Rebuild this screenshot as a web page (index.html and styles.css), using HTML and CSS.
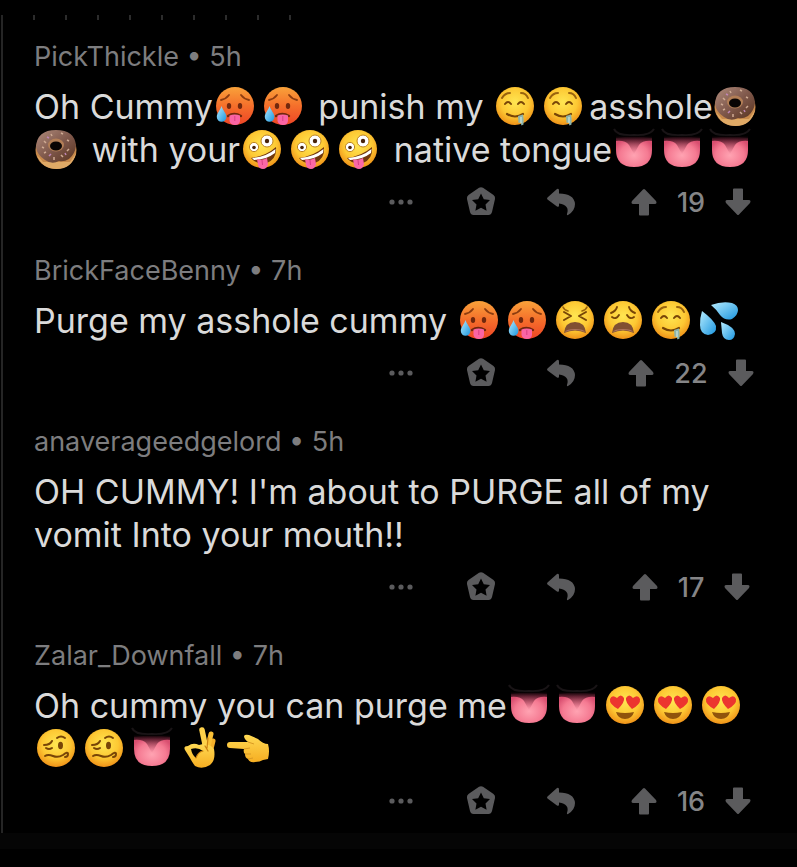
FILE: index.html
```
<!DOCTYPE html>
<html lang="en">
<head>
<meta charset="utf-8">
<meta name="viewport" content="width=device-width, initial-scale=1">
<title>Comments</title>
<link rel="stylesheet" href="styles.css">
</head>
<body>
<svg class="defs" aria-hidden="true">
  <defs>
    <radialGradient id="yellow" cx=".5" cy=".4" r=".62"><stop offset="0" stop-color="#ffe652"/><stop offset=".6" stop-color="#fdc833"/><stop offset="1" stop-color="#ee8d16"/></radialGradient>
    <linearGradient id="hotg" x1="0" y1="0" x2="0" y2="1"><stop offset="0" stop-color="#f9a23a"/><stop offset=".5" stop-color="#f56f2b"/><stop offset="1" stop-color="#ee4526"/></linearGradient>
    <linearGradient id="water" x1="0" y1="0" x2="1" y2="1"><stop offset="0" stop-color="#b5ecff"/><stop offset="1" stop-color="#1c96df"/></linearGradient>
    <radialGradient id="pink" cx=".5" cy=".62" r=".6"><stop offset="0" stop-color="#ffa3b2"/><stop offset=".65" stop-color="#f57a92"/><stop offset="1" stop-color="#d94f70"/></radialGradient>
    <linearGradient id="throat" x1="0" y1="0" x2="0" y2="1"><stop offset="0" stop-color="#000"/><stop offset=".25" stop-color="#3a0f1c" stop-opacity=".75"/><stop offset="1" stop-color="#b8405f" stop-opacity="0"/></linearGradient>
    <linearGradient id="hand" x1="0" y1="0" x2="0" y2="1"><stop offset="0" stop-color="#ffd953"/><stop offset="1" stop-color="#f6ae22"/></linearGradient>
    <linearGradient id="glaze" x1="0" y1="0" x2="1" y2="1"><stop offset="0" stop-color="#b08b7c"/><stop offset=".5" stop-color="#80594c"/><stop offset="1" stop-color="#57321f"/></linearGradient>

    <symbol id="hot" viewBox="0 0 44 44">
      <circle cx="22" cy="22" r="19" fill="url(#hotg)"/>
      <path d="M8 16q5-1 8-5M28 11q3 4 8 5" fill="none" stroke="#8c3c10" stroke-width="1.8" stroke-linecap="round"/>
      <ellipse cx="16" cy="22" rx="2.2" ry="2.9" fill="#71280d"/><ellipse cx="27" cy="22" rx="2.2" ry="2.9" fill="#71280d"/>
      <path d="M15 32q6-4 13 0" fill="none" stroke="#71280d" stroke-width="2.4" stroke-linecap="round"/>
      <path d="M16.500 31.500q5-2 10.500 0v5.500q-.5 4-5 4t-5.500-4z" fill="#fa64a4"/><path d="M21.800 32v5" stroke="#d93f83"/>
      <path d="M8.500 22C7 27 3.800 29 3.800 33a4.800 4.800 0 0 0 9.600 0C13.400 29 10 27 8.500 22z" fill="url(#water)"/>
    </symbol>
    <symbol id="drool" viewBox="0 0 44 44">
      <circle cx="22" cy="22" r="19" fill="url(#yellow)"/>
      <path d="M9 14q3-5 8-5M28 9q5 0 7 5" fill="none" stroke="#99630e" stroke-width="2" stroke-linecap="round"/>
      <path d="M12 20q3-4 6 0M25 20q3-4 6 0" fill="none" stroke="#784507" stroke-width="2" stroke-linecap="round"/>
      <path d="M14 30q8 5 16 0" fill="none" stroke="#784507" stroke-width="2.200" stroke-linecap="round"/>
      <path d="M25 32l5-1.500q1 4 .5 10l-2 1-1-3-2 .5z" fill="#8db5ac"/><path d="M28 33v6" stroke="#dceee5" stroke-width="1"/>
    </symbol>
    <symbol id="zany" viewBox="0 0 44 44">
      <circle cx="22" cy="22" r="19" fill="url(#yellow)"/>
      <circle cx="14" cy="20" r="4.600" fill="#fff" stroke="#bd8420"/><circle cx="14" cy="20.500" r="1.800" fill="#48240c"/>
      <circle cx="27" cy="14" r="6" fill="#fff" stroke="#bd8420"/><circle cx="27" cy="14" r="2.200" fill="#48240c"/>
      <path d="M11 31Q26 29 36 20Q37 32 27 36Q16 38 11 31z" fill="#71370c"/><path d="M12 31Q26 30 35.500 22L35 26Q26 33 14 33z" fill="#fff"/>
      <path d="M17 32q5 2 10-1l1 6q-1 5-5 5t-5-4z" fill="#fa68a6"/><path d="M22 33l.5 5" stroke="#d93f83"/>
    </symbol>
    <symbol id="tired" viewBox="0 0 44 44">
      <circle cx="22" cy="22" r="19" fill="url(#yellow)"/>
      <path d="M10 9q1 3 5 4M34 9q-1 3-5 4" fill="none" stroke="#9a650e" stroke-width="1.600" stroke-linecap="round"/>
      <path d="M11 14l7 4-7 4M33 14l-7 4 7 4" fill="none" stroke="#784507" stroke-width="2" stroke-linecap="round" stroke-linejoin="round"/>
      <path d="M11 35q1-11 11-11t11 11q-11-5-22 0z" fill="#805032"/><path d="M12 34q1-3 10-3t10 3q-10-4-20 0z" fill="#ad755e"/>
    </symbol>
    <symbol id="weary" viewBox="0 0 44 44">
      <circle cx="22" cy="22" r="19" fill="url(#yellow)"/>
      <path d="M10 15q5-2 6-6M28 9q1 4 6 6M11 19q4 3 7-2M26 17q3 5 7 2" fill="none" stroke="#784507" stroke-width="1.900" stroke-linecap="round"/>
      <path d="M11 35q1-11 11-11t11 11q-11-5-22 0z" fill="#805032"/><path d="M12 34q1-3 10-3t10 3q-10-4-20 0z" fill="#ad755e"/>
    </symbol>
    <symbol id="hearts" viewBox="0 0 44 44">
      <circle cx="22" cy="22" r="19" fill="url(#yellow)"/>
      <path d="M15 26Q6 21 7 16Q9 11 14 15Q18 10 21 15Q22 19 15 26z" fill="#ec352f"/><path d="M29 26Q22 19 23 15Q26 10 30 15Q35 11 37 16Q38 21 29 26z" fill="#ec352f"/>
      <path d="M13 29q9 2 18 0-2 7-9 7t-9-7z" fill="#90540c"/>
    </symbol>
    <symbol id="woozy" viewBox="0 0 44 44">
      <circle cx="22" cy="22" r="19" fill="url(#yellow)"/>
      <path d="M10 19q6 0 8-4M12 22q3 2 6 0M23 12q4-3 8 0M11 30q3-2 8 0t10-1q5-4 5-1 0 3-3 3" fill="none" stroke="#784507" stroke-width="2" stroke-linecap="round"/>
      <ellipse cx="26.500" cy="19.500" rx="2.500" ry="3.700" fill="#784507"/>
    </symbol>
    <symbol id="tongue" viewBox="0 0 44 44">
      <path d="M2 2q3 7 20 6Q38 9 42 2" fill="none" stroke="#191416" stroke-width="2"/>
      <path d="M4 11Q22 8 40 11V23Q40 40 22 40T4 23z" fill="url(#pink)"/>
      <path d="M4 9H40V14Q31 13 27 18L22 27 17 18Q13 13 4 14z" fill="url(#throat)"/>
    </symbol>
    <symbol id="donut" viewBox="0 0 44 44">
      <ellipse cx="22" cy="23" rx="20.500" ry="19" fill="#c7894b"/><path d="M3 28Q8 42 23 42T42 26L36 35H9z" fill="#e0aa66"/>
      <path d="M2 20Q3 3 22 3T42 19Q41 27 35 32Q30 35 25 34Q18 38 11 33Q3 28 2 20z" fill="url(#glaze)"/>
      <ellipse cx="22" cy="18" rx="8" ry="6.500" fill="#b27e56"/><ellipse cx="22" cy="19" rx="6" ry="4.600" fill="#090504"/>
      <path d="M10 14l2 2M17 7l1 2M27 6l2 1M33 13l2 1M35 22l-2 2M27 28l2 2M20 30v3M12 25l-2 1M8 20l2 1" stroke="#d0ab94" stroke-width="1.500"/><path d="M13 10l2 1M31 26l1 2M15 29l2-2" stroke="#bf86b6" stroke-width="1.500"/>
    </symbol>
    <symbol id="drops" viewBox="0 0 44 44">
      <path d="M14 7Q25 3 35 5Q41 7 41 12T35 21Q28 23 23 17Q20 12 14 7z" fill="url(#water)"/><path d="M5 13Q17 22 19 28Q20 36 11 37Q3 36 3 27Q3 19 5 13z" fill="url(#water)"/><path d="M24 24Q38 29 38 36Q37 42 32 42Q26 42 25 35z" fill="url(#water)"/>
    </symbol>
    <symbol id="ok" viewBox="0 0 44 44">
      <path d="M35 15L32 27" stroke="#f5b02a" stroke-width="5" stroke-linecap="round"/>
      <path d="M33 8L29 25" stroke="#fbc136" stroke-width="5" stroke-linecap="round"/>
      <path d="M24 4L28 23" stroke="#ffd24a" stroke-width="5.500" stroke-linecap="round"/>
      <path fill-rule="evenodd" d="M25 18Q32 18 36 23Q38 34 32 39Q24 44 17 40Q14 36 12 32L7 24Q5 20 10 20Q15 16 21 19zM13 23Q14 29 18 32Q20 26 25 25Q20 21 13 23z" fill="url(#hand)"/>
      <path d="M18 32Q20 26 25 25M27 20L30 25M30 12L29 22" fill="none" stroke="#cc8212" stroke-width="1.200" stroke-linecap="round"/>
    </symbol>
    <symbol id="point" viewBox="0 0 44 44">
      <path d="M4 16q-3 0-3 3t3 3l14 1q-1 3 1 5 0 4 3 5 2 4 7 3 5 0 8-2l5-1q2-8 0-15-5 0-10-5l-9-4q-4-1-5 1 0 3 4 6z" fill="url(#hand)"/>
      <path d="M18 23l6-1M19 28l6 0M22 33l5-1M22 16l6 2" fill="none" stroke="#d99a24" stroke-width="1"/>
    </symbol>

    <symbol id="i-more" viewBox="0 0 32 32"><circle cx="7" cy="16" r="2.600"/><circle cx="16" cy="16" r="2.600"/><circle cx="25" cy="16" r="2.600"/></symbol>
    <symbol id="i-award" viewBox="0 0 32 32"><path fill-rule="evenodd" d="M14 1.800Q16 .6 18 1.800L28.500 9Q30.500 10.500 30 13L27 26Q26.200 29 23.500 29H8.500Q5.800 29 5 26L2 13Q1.500 10.500 3.500 9zM16 7.500l-2.800 5.700-6.200.9 4.500 4.400-1.100 6.200L16 21.800l5.600 2.900-1.100-6.200 4.500-4.400-6.200-.9z"/></symbol>
    <symbol id="i-reply" viewBox="0 0 32 32"><path d="M2.500 11.500L12 3Q14 2 14 4.500V7.500Q29 7.500 30 18Q30 25 23 29Q21.500 29.500 22 28Q25 19 14 17.500V19.500Q14 21.500 12 20.500L2.500 13.500Q1.500 12.500 2.500 11.500z"/></symbol>
    <symbol id="i-up" viewBox="0 0 26 28"><path d="M12 1.500Q13 .3 14 1.500L25 13Q26.500 16 23.500 16H18V26.500Q18 27.500 17 27.500H9Q8 27.500 8 26.500V16H2.500Q-.5 16 1 13z"/></symbol>
    <symbol id="i-down" viewBox="0 0 26 28"><path d="M12 26.500Q13 27.700 14 26.500L25 15Q26.500 12 23.500 12H18V1.500Q18 .5 17 .5H9Q8 .5 8 1.500V12H2.500Q-.5 12 1 15z"/></symbol>
  </defs>
</svg>

<main class="thread">
  <div class="ticks" aria-hidden="true"><i></i><i></i><i></i><i></i><i></i><i></i><i></i><i></i><i></i></div>

  <article class="comment">
    <header class="meta">PickThickle • 5h</header>
    <p class="body">Oh Cummy<svg class="emoji"><use href="#hot"/></svg><svg class="emoji"><use href="#hot"/></svg> punish my <svg class="emoji"><use href="#drool"/></svg><svg class="emoji"><use href="#drool"/></svg>asshole<svg class="emoji"><use href="#donut"/></svg><svg class="emoji"><use href="#donut"/></svg> with your<svg class="emoji"><use href="#zany"/></svg><svg class="emoji"><use href="#zany"/></svg><svg class="emoji"><use href="#zany"/></svg> native tongue<svg class="emoji"><use href="#tongue"/></svg><svg class="emoji"><use href="#tongue"/></svg><svg class="emoji"><use href="#tongue"/></svg></p>
    <footer class="actions">
      <button class="action" aria-label="More"><svg class="icon"><use href="#i-more"/></svg></button>
      <button class="action" aria-label="Award"><svg class="icon"><use href="#i-award"/></svg></button>
      <button class="action" aria-label="Reply"><svg class="icon"><use href="#i-reply"/></svg></button>
      <div class="votes"><button aria-label="Upvote"><svg class="arrow"><use href="#i-up"/></svg></button><span>19</span><button aria-label="Downvote"><svg class="arrow"><use href="#i-down"/></svg></button></div>
    </footer>
  </article>

  <article class="comment">
    <header class="meta">BrickFaceBenny • 7h</header>
    <p class="body">Purge my asshole cummy <svg class="emoji"><use href="#hot"/></svg><svg class="emoji"><use href="#hot"/></svg><svg class="emoji"><use href="#tired"/></svg><svg class="emoji"><use href="#weary"/></svg><svg class="emoji"><use href="#drool"/></svg><svg class="emoji"><use href="#drops"/></svg></p>
    <footer class="actions">
      <button class="action" aria-label="More"><svg class="icon"><use href="#i-more"/></svg></button>
      <button class="action" aria-label="Award"><svg class="icon"><use href="#i-award"/></svg></button>
      <button class="action" aria-label="Reply"><svg class="icon"><use href="#i-reply"/></svg></button>
      <div class="votes"><button aria-label="Upvote"><svg class="arrow"><use href="#i-up"/></svg></button><span>22</span><button aria-label="Downvote"><svg class="arrow"><use href="#i-down"/></svg></button></div>
    </footer>
  </article>

  <article class="comment">
    <header class="meta">anaverageedgelord • 5h</header>
    <p class="body">OH CUMMY! I'm about to PURGE all of my vomit Into your mouth!!</p>
    <footer class="actions">
      <button class="action" aria-label="More"><svg class="icon"><use href="#i-more"/></svg></button>
      <button class="action" aria-label="Award"><svg class="icon"><use href="#i-award"/></svg></button>
      <button class="action" aria-label="Reply"><svg class="icon"><use href="#i-reply"/></svg></button>
      <div class="votes"><button aria-label="Upvote"><svg class="arrow"><use href="#i-up"/></svg></button><span>17</span><button aria-label="Downvote"><svg class="arrow"><use href="#i-down"/></svg></button></div>
    </footer>
  </article>

  <article class="comment">
    <header class="meta">Zalar_Downfall • 7h</header>
    <p class="body">Oh cummy you can purge me<svg class="emoji"><use href="#tongue"/></svg><svg class="emoji"><use href="#tongue"/></svg><svg class="emoji"><use href="#hearts"/></svg><svg class="emoji"><use href="#hearts"/></svg><svg class="emoji"><use href="#hearts"/></svg><svg class="emoji"><use href="#woozy"/></svg><svg class="emoji"><use href="#woozy"/></svg><svg class="emoji"><use href="#tongue"/></svg><svg class="emoji"><use href="#ok"/></svg><svg class="emoji"><use href="#point"/></svg></p>
    <footer class="actions">
      <button class="action" aria-label="More"><svg class="icon"><use href="#i-more"/></svg></button>
      <button class="action" aria-label="Award"><svg class="icon"><use href="#i-award"/></svg></button>
      <button class="action" aria-label="Reply"><svg class="icon"><use href="#i-reply"/></svg></button>
      <div class="votes"><button aria-label="Upvote"><svg class="arrow"><use href="#i-up"/></svg></button><span>16</span><button aria-label="Downvote"><svg class="arrow"><use href="#i-down"/></svg></button></div>
    </footer>
  </article>
</main>
<div class="divider"></div>
</body>
</html>
```
FILE: styles.css
```
* {
  box-sizing: border-box;
}

body {
  margin: 0;
  padding-top: 15px;
  background: #000;
  color: #dadada;
  font-family: Inter, "Liberation Sans", sans-serif;
}

.defs {
  position: absolute;
  width: 0;
  height: 0;
}

.thread {
  margin-left: 1px;
  border-left: 2px solid #252525;
}

.ticks {
  display: flex;
  gap: 30px;
  height: 25px;
  padding-left: 30px;
}

.ticks i {
  width: 2px;
  height: 5px;
  background: #2c2c2c;
}

.comment {
  padding: 0 16px 32px 31px;
}

.comment:last-child {
  padding-bottom: 12px;
}

.meta {
  margin-bottom: 11px;
  color: #7d7d7f;
  font-size: 27px;
  line-height: 34px;
}

.body {
  margin: 0 8px 11px 0;
  font-size: 34px;
  line-height: 43px;
}

.emoji {
  display: inline-block;
  width: 44px;
  height: 44px;
  margin: -4px 4px -4px 0;
  vertical-align: -5px;
}

.actions {
  display: flex;
  justify-content: flex-end;
  height: 40px;
}

button {
  display: flex;
  align-items: center;
  justify-content: center;
  padding: 0;
  border: 0;
  background: none;
  color: #5b5b5d;
  font: inherit;
}

.action {
  width: 80px;
}

.icon {
  width: 32px;
  height: 32px;
  fill: currentColor;
}

.arrow {
  width: 26px;
  height: 28px;
  fill: currentColor;
}

.votes {
  display: flex;
  align-items: center;
  justify-content: center;
  gap: 20px;
  width: 180px;
  color: #858587;
  font-size: 27px;
  font-weight: 500;
}

.divider {
  height: 16px;
  background: #050505;
}
```
